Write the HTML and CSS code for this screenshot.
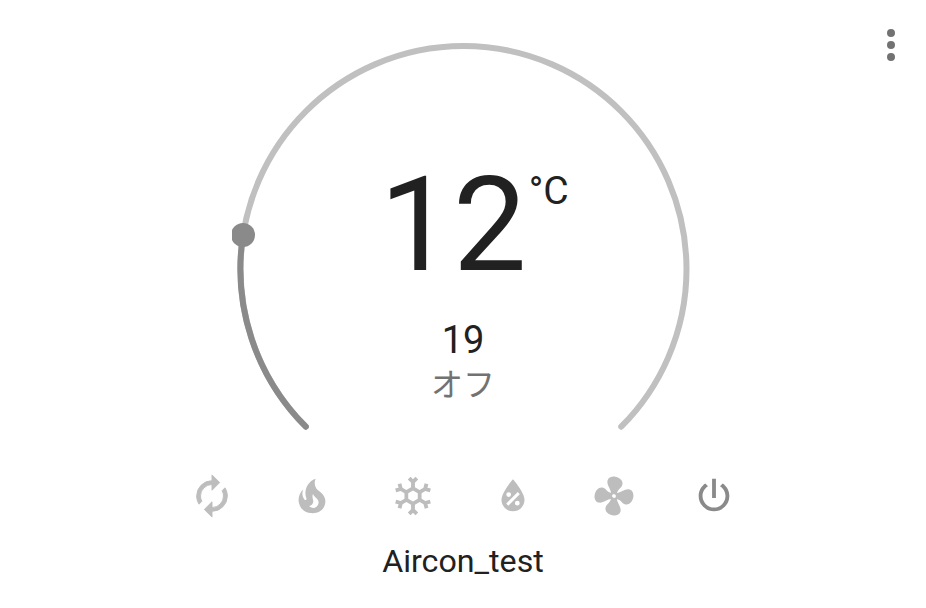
FILE: index.html
```html
<!doctype html>
<html lang="ja">
  <head>
    <meta charset="utf-8">
    <title>Aircon_test</title>
    <link rel="stylesheet" href="styles.css">
  </head>
  <body>
    <div class="card">
      <button class="menu" type="button" aria-label="menu">
        <svg class="menuIcon" viewBox="0 0 24 24"><path d="M12,16A2,2 0 0,1 14,18A2,2 0 0,1 12,20A2,2 0 0,1 10,18A2,2 0 0,1 12,16M12,10A2,2 0 0,1 14,12A2,2 0 0,1 12,14A2,2 0 0,1 10,12A2,2 0 0,1 12,10M12,4A2,2 0 0,1 14,6A2,2 0 0,1 12,8A2,2 0 0,1 10,6A2,2 0 0,1 12,4Z"/></svg>
      </button>

      <div class="dial">
        <svg class="dialArc" viewBox="0 0 462 396">
          <path class="track" d="M73.8 389.7 A223 223 0 1 1 389.2 389.7"/>
          <path class="value" d="M73.8 389.7 A223 223 0 0 1 11 198"/>
          <circle class="handle" cx="11" cy="198" r="12"/>
        </svg>
        <div class="readout">
          <div class="current">12<span class="unit">°C</span></div>
          <div class="target">19</div>
          <div class="state">オフ</div>
        </div>
      </div>

      <div class="modes">
        <svg class="mode thick" viewBox="0 0 24 24"><path d="M12,6V9L16,5L12,1V4A8,8 0 0,0 4,12C4,13.57 4.46,15.03 5.24,16.26L6.7,14.8C6.25,13.97 6,13 6,12A6,6 0 0,1 12,6M18.76,7.74L17.3,9.2C17.74,10.04 18,11 18,12A6,6 0 0,1 12,18V15L8,19L12,23V20A8,8 0 0,0 20,12C20,10.43 19.54,8.97 18.76,7.74Z"/></svg>
        <svg class="mode" viewBox="0 0 24 24"><path d="M17.66 11.2C17.43 10.9 17.15 10.64 16.89 10.38C16.22 9.78 15.46 9.35 14.82 8.72C13.33 7.26 13 4.85 13.95 3C13 3.23 12.17 3.75 11.46 4.32C8.87 6.4 7.85 10.07 9.07 13.22C9.11 13.32 9.15 13.42 9.15 13.55C9.15 13.77 9 13.97 8.8 14.05C8.57 14.15 8.33 14.09 8.14 13.93C8.08 13.88 8.04 13.83 8 13.76C6.87 12.33 6.69 10.28 7.45 8.64C5.78 10 4.87 12.3 5 14.47C5.06 14.97 5.12 15.47 5.29 15.97C5.43 16.57 5.7 17.17 6 17.7C7.08 19.43 8.95 20.67 10.96 20.92C13.1 21.19 15.39 20.8 17.03 19.32C18.86 17.66 19.5 15 18.56 12.72L18.43 12.46C18.22 12 17.66 11.2 17.66 11.2M14.5 17.5C14.22 17.74 13.76 18 13.4 18.1C12.28 18.5 11.16 17.94 10.5 17.28C11.69 17 12.4 16.12 12.61 15.23C12.78 14.43 12.46 13.77 12.33 13C12.21 12.26 12.23 11.63 12.5 10.94C12.69 11.32 12.89 11.7 13.13 12C13.9 13 15.11 13.44 15.37 14.8C15.41 14.94 15.43 15.08 15.43 15.23C15.46 16.05 15.1 16.95 14.5 17.5H14.5Z"/></svg>
        <svg class="mode" viewBox="0 0 24 24"><path d="M20.79,13.95L18.46,14.57L16.46,13.44V10.56L18.46,9.43L20.79,10.05L21.31,8.12L19.54,7.65L20,5.88L18.07,5.36L17.45,7.69L15.45,8.82L13,7.38V5.12L14.71,3.41L13.29,2L12,3.29L10.71,2L9.29,3.41L11,5.12V7.38L8.5,8.82L6.5,7.69L5.92,5.36L4,5.88L4.47,7.65L2.7,8.12L3.22,10.05L5.55,9.43L7.55,10.56V13.45L5.55,14.58L3.22,13.96L2.7,15.89L4.47,16.36L4,18.12L5.93,18.64L6.55,16.31L8.55,15.18L11,16.62V18.88L9.29,20.59L10.71,22L12,20.71L13.29,22L14.7,20.59L13,18.88V16.62L15.5,15.17L17.5,16.3L18.12,18.63L20,18.12L19.53,16.35L21.3,15.88L20.79,13.95M9.5,10.56L12,9.11L14.5,10.56V13.44L12,14.89L9.5,13.44V10.56Z"/></svg>
        <svg class="mode" viewBox="0 0 24 24"><path d="M12,3.25C12,3.25 6,10 6,14C6,17.32 8.69,20 12,20A6,6 0 0,0 18,14C18,10 12,3.25 12,3.25M14.47,9.97L15.53,11.03L9.53,17.03L8.47,15.97M9.75,10A1.25,1.25 0 0,1 11,11.25A1.25,1.25 0 0,1 9.75,12.5A1.25,1.25 0 0,1 8.5,11.25A1.25,1.25 0 0,1 9.75,10M14.25,14.5A1.25,1.25 0 0,1 15.5,15.75A1.25,1.25 0 0,1 14.25,17A1.25,1.25 0 0,1 13,15.75A1.25,1.25 0 0,1 14.25,14.5Z"/></svg>
        <svg class="mode" viewBox="0 0 24 24">
          <g transform="translate(12 12) rotate(12)">
            <path id="blade" d="M-1.8 -1C-2 -3 -5 -4.6 -5 -7.2C-5 -9 -3 -10 -1.4 -10C1.4 -10 3.4 -8.4 3 -6.4C2.8 -4.8 1.2 -4 1.2 -1.6Z"/>
            <use href="#blade" transform="rotate(90)"/>
            <use href="#blade" transform="rotate(180)"/>
            <use href="#blade" transform="rotate(270)"/>
            <circle r="2.2"/>
            <circle class="hub" r="1"/>
          </g>
        </svg>
        <svg class="mode active" viewBox="0 0 24 24"><path d="M16.56,5.44L15.11,6.89C16.84,7.94 18,9.83 18,12A6,6 0 0,1 12,18A6,6 0 0,1 6,12C6,9.83 7.16,7.94 8.88,6.88L7.44,5.44C5.36,6.88 4,9.28 4,12A8,8 0 0,0 12,20A8,8 0 0,0 20,12C20,9.28 18.64,6.88 16.56,5.44M13,3H11V13H13"/></svg>
      </div>

      <div class="name">Aircon_test</div>
    </div>
  </body>
</html>
```

FILE: styles.css
```css
* {
  margin: 0;
  padding: 0;
  box-sizing: border-box;
}

body {
  font-family: Roboto, "Noto Sans CJK JP", sans-serif;
  color: #212121;
  background: #fff;
  overflow: hidden;
}

.card {
  position: relative;
  display: flex;
  flex-direction: column;
  align-items: center;
  height: 608px;
  padding-top: 37px;
}

.menu {
  position: absolute;
  top: 21px;
  right: 11px;
  width: 48px;
  height: 48px;
  border: none;
  background: none;
}

.menuIcon {
  display: block;
  width: 48px;
  height: 48px;
  fill: #727272;
}

.dial {
  position: relative;
  width: 462px;
  height: 396px;
}

.dialArc {
  display: block;
  width: 462px;
  height: 396px;
  fill: none;
}

.track,
.value {
  stroke-width: 6;
  stroke-linecap: round;
}

.track {
  stroke: #c0c0c0;
}

.value {
  stroke: #8a8a8a;
}

.handle {
  fill: #8a8a8a;
}

.readout {
  position: absolute;
  top: 0;
  left: 0;
  right: 0;
  display: flex;
  flex-direction: column;
  align-items: center;
  padding-top: 113px;
}

.current {
  position: relative;
  margin-right: 20px;
  font-size: 131px;
  font-weight: 400;
  line-height: 150px;
}

.unit {
  position: absolute;
  left: 100%;
  top: 18px;
  margin-left: 2px;
  font-size: 39px;
  font-weight: 400;
  line-height: 46px;
}

.target {
  margin-top: 18px;
  font-size: 38px;
  line-height: 44px;
}

.state {
  margin-top: 1px;
  font-size: 32px;
  font-weight: 400;
  line-height: 44px;
  color: #727272;
}

.modes {
  display: flex;
  justify-content: center;
  gap: 54.4px;
  margin-top: 40px;
}

.mode {
  display: block;
  width: 46px;
  height: 46px;
  fill: #bdbdbd;
}

.mode.active {
  fill: #8a8a8a;
}

.mode.thick {
  stroke: #bdbdbd;
  stroke-width: 0.5;
}

.mode .hub {
  fill: #fff;
}

.name {
  margin-top: 22px;
  font-size: 32.2px;
  line-height: 40px;
}
```
